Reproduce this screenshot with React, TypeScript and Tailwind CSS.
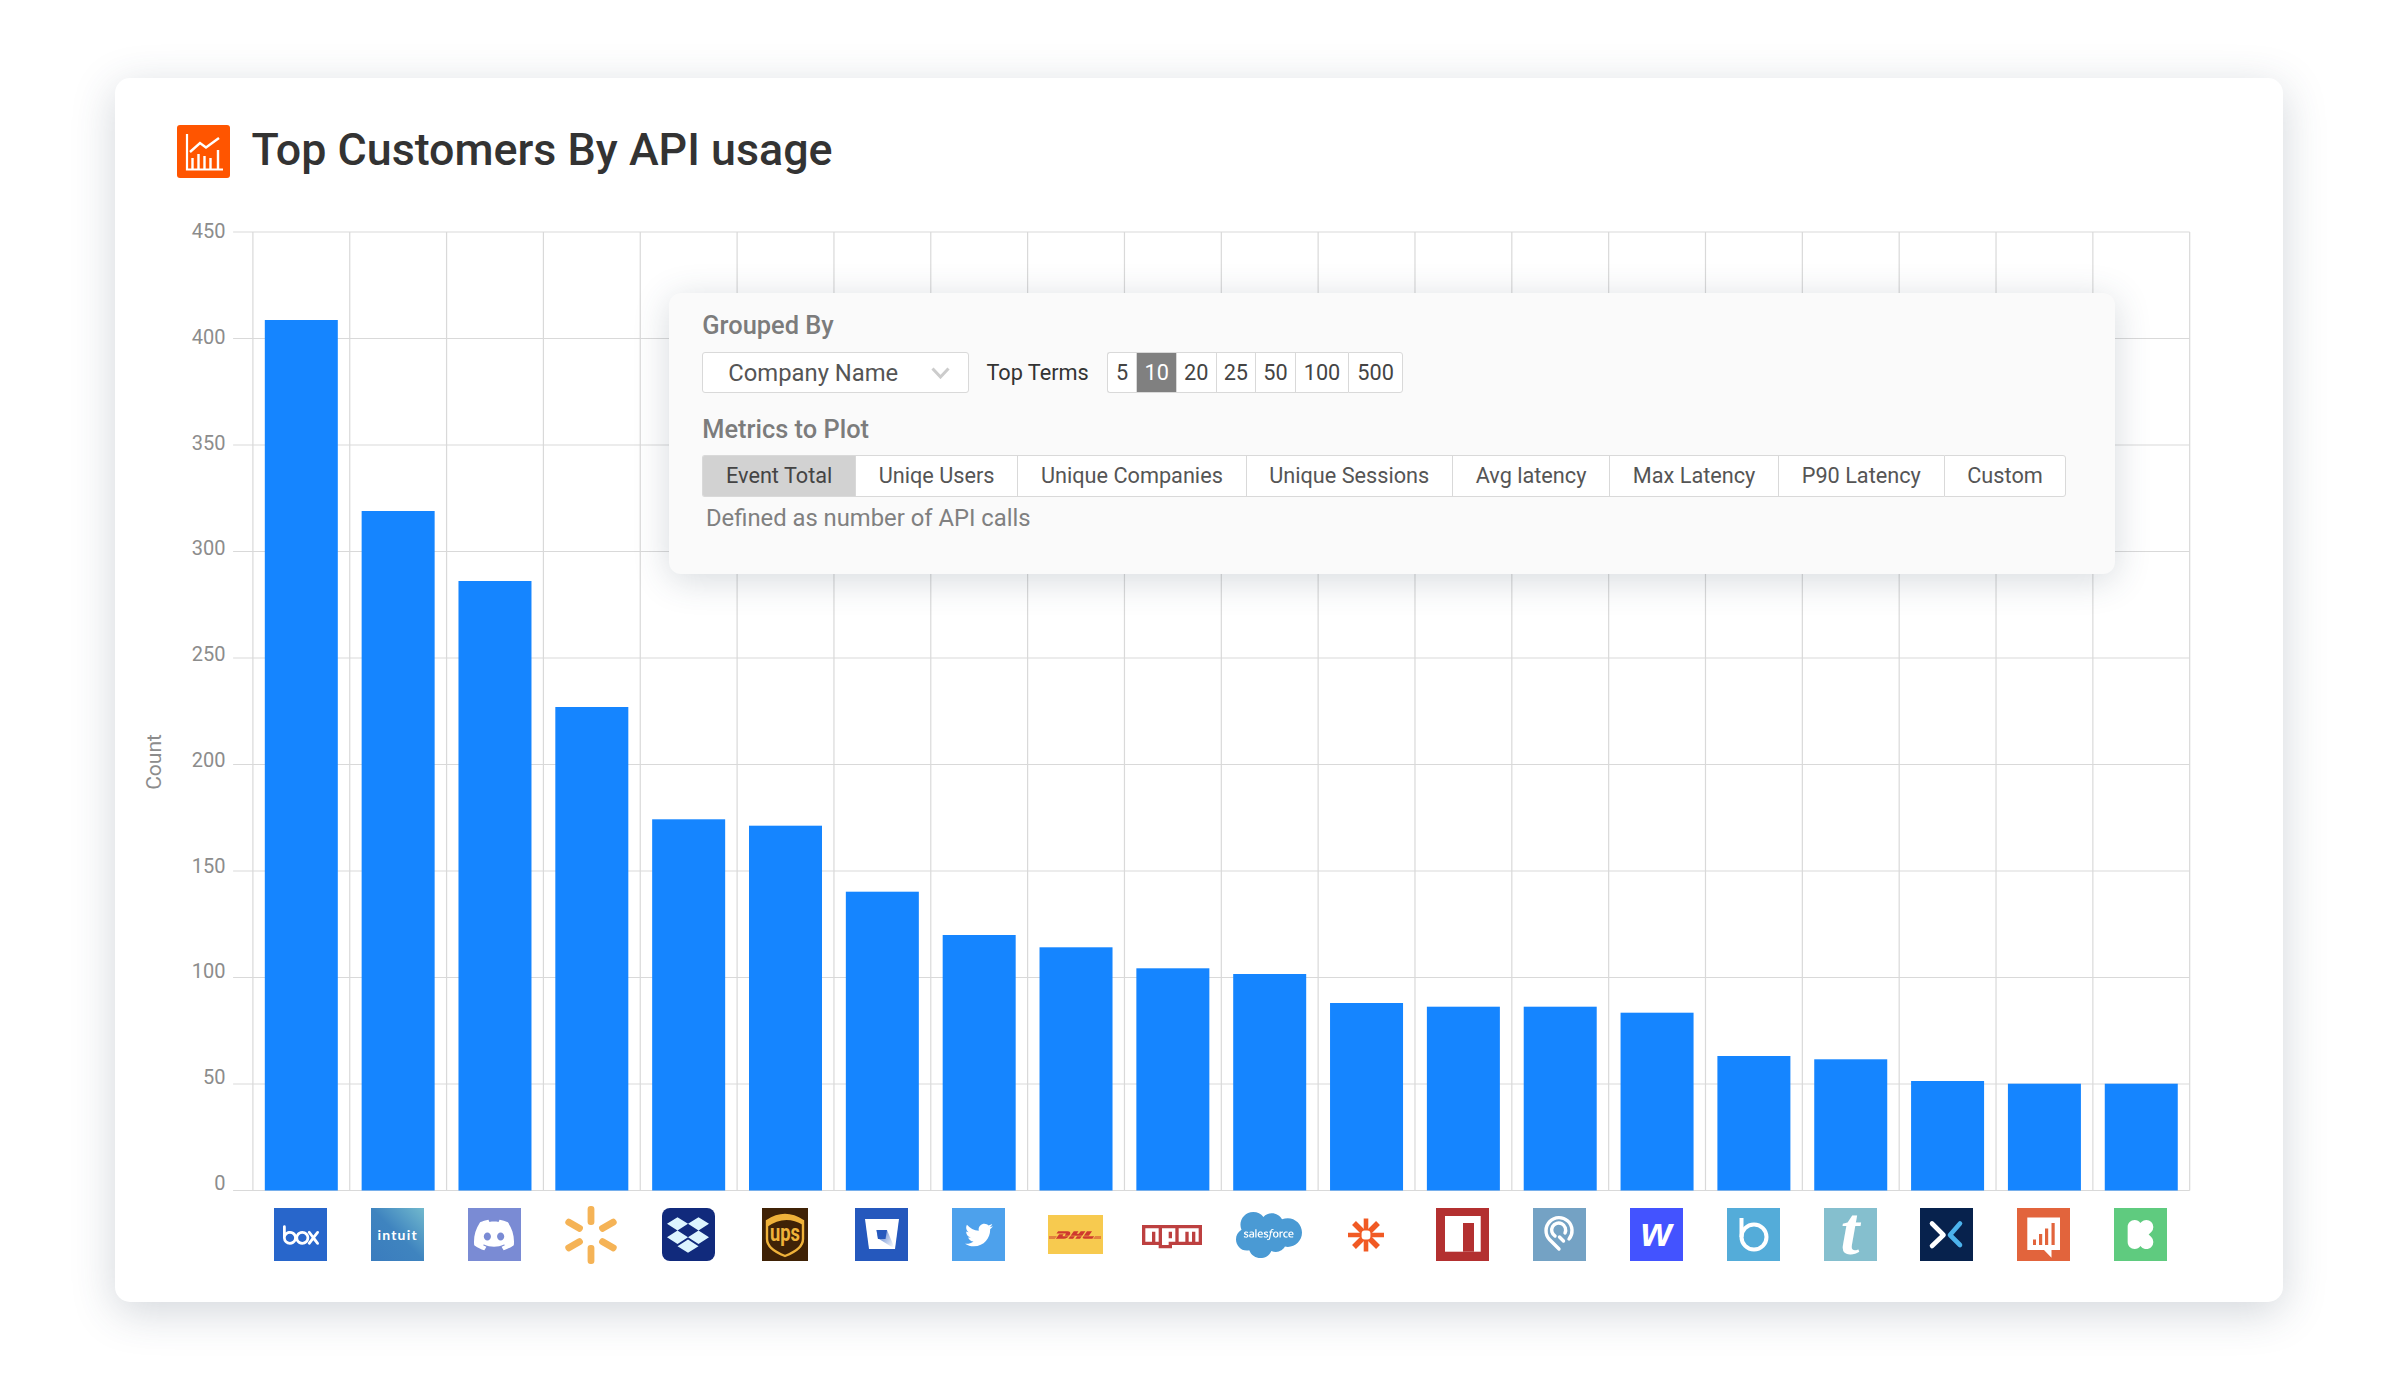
import { ReactNode } from 'react';
import { FaNpm, FaSalesforce, FaTwitter } from 'react-icons/fa';
import { SiBox, SiDhl, SiDiscord, SiDropbox, SiKickstarter } from 'react-icons/si';

const BAR_TOPS = [
  320, 511, 581, 707, 819.3, 825.7, 891.7, 935, 947.3, 968.3, 974, 1003, 1006.7, 1006.7, 1012.7, 1056, 1059.3, 1081,
  1083.7, 1083.7,
];
const BASELINE = 1190.5;
const COL = 96.84;
const GRID_LEFT = 252.4;

const TERMS = [
  { label: '5', cls: 'px-[8.2px] border-l-[1.5px] rounded-l-[3px] bg-white text-[#444]' },
  { label: '10', cls: 'px-[7.1px] border-l-[1.5px] bg-[#808080] text-white' },
  { label: '20', cls: 'px-[7.1px] border-l-[1.5px] bg-white text-[#444]' },
  { label: '25', cls: 'px-[7.1px] border-l-[1.5px] bg-white text-[#444]' },
  { label: '50', cls: 'px-[7.1px] border-l-[1.5px] bg-white text-[#444]' },
  { label: '100', cls: 'px-[8px] border-l-[1.5px] bg-white text-[#444]' },
  { label: '500', cls: 'px-[8px] border-x-[1.5px] rounded-r-[3px] bg-white text-[#444]' },
];

const METRICS = [
  { label: 'Event Total', cls: 'border-l-[1.5px] rounded-l-[3px] bg-[#d2d2d2] text-[#444]' },
  { label: 'Uniqe Users', cls: 'border-l-[1.5px] bg-white text-[#555]' },
  { label: 'Unique Companies', cls: 'border-l-[1.5px] bg-white text-[#555]' },
  { label: 'Unique Sessions', cls: 'border-l-[1.5px] bg-white text-[#555]' },
  { label: 'Avg latency', cls: 'border-l-[1.5px] bg-white text-[#555]' },
  { label: 'Max Latency', cls: 'border-l-[1.5px] bg-white text-[#555]' },
  { label: 'P90 Latency', cls: 'border-l-[1.5px] bg-white text-[#555]' },
  { label: 'Custom', cls: 'border-x-[1.5px] rounded-r-[3px] bg-white text-[#555]' },
];

const Tile = ({ cls, children }: { cls: string; children: ReactNode }) => (
  <div className={`w-[53px] h-[53px] flex items-center justify-center ${cls}`}>{children}</div>
);

const WalmartSpark = () => (
  <svg width="56" height="58" viewBox="-28 -29 56 58" fill="#f5b356">
    {[0, 60, 120, 180, 240, 300].map((deg) => (
      <rect key={deg} x="-3.4" y="-29" width="6.8" height="19" rx="3" transform={`rotate(${deg})`} />
    ))}
  </svg>
);

const ZapierMark = () => (
  <svg width="38" height="36" viewBox="-19 -18 38 36">
    <g stroke="#f15a24" strokeWidth="4.6">
      <line x1="-18" x2="18" y1="0" y2="0" />
      <line x1="0" x2="0" y1="-16.5" y2="16.5" />
      <line x1="-12" x2="12" y1="-12" y2="12" strokeWidth="5.4" />
      <line x1="-12" x2="12" y1="12" y2="-12" strokeWidth="5.4" />
    </g>
    <rect x="-4.4" y="-4.4" width="8.8" height="8.8" rx="3" fill="#fff" />
  </svg>
);

const UpsMark = () => (
  <svg width="46" height="53" viewBox="0 0 46 53">
    <path d="M5 13 Q23 1 41 13 V31 Q41 41 23 48 Q5 41 5 31 Z" fill="none" stroke="#efb23a" strokeWidth="2.4" />
    <path d="M5 13 Q23 1 41 13 V17 Q23 6 5 19 Z" fill="#efb23a" />
    <text x="8" y="33" fontSize="24" fontWeight="700" textLength="30" lengthAdjust="spacingAndGlyphs" fontFamily="Roboto, sans-serif" fill="#efb23a">
      ups
    </text>
  </svg>
);

const LOGOS: ReactNode[] = [
  <Tile cls="bg-[#2866cb]"><SiBox size={36} className="text-white" /></Tile>,
  <Tile cls="bg-gradient-to-tr from-[#3a7cbe] via-[#3f84bf] to-[#72b9cd]">
    <span className="text-white text-[14px] leading-none font-bold tracking-[1.2px] font-['Lato',sans-serif]">intuit</span>
  </Tile>,
  <Tile cls="bg-[#7a8bd4]"><SiDiscord size={40} className="text-white" /></Tile>,
  <WalmartSpark />,
  <Tile cls="bg-[#112a7c] rounded-[8px]"><SiDropbox size={42} className="text-[#ddf5ff]" /></Tile>,
  <Tile cls="bg-[#3f2206] !w-[46px]"><UpsMark /></Tile>,
  <Tile cls="bg-[#2558bd]">
    <svg width="53" height="53" viewBox="0 0 53 53">
      <defs>
        <linearGradient id="bucket" x1="0" y1="0.1" x2="1" y2="0.8">
          <stop offset="0.3" stopColor="#7c9bd8" />
          <stop offset="1" stopColor="#ffffff" />
        </linearGradient>
      </defs>
      <polygon points="10,11 44,11 40,41 14,41" fill="#fff" />
      <polygon points="21.5,22 32,22 40,41 24,31 23,31" fill="url(#bucket)" />
      <polygon points="21.5,22 32,22 30.5,31 23,31" fill="#2558bd" />
    </svg>
  </Tile>,
  <Tile cls="bg-[#4da1ec]"><FaTwitter size={28} className="text-white" /></Tile>,
  <div className="w-[55px] h-[39px] bg-[#f7ca4f] flex items-center justify-center"><SiDhl size={52} className="text-[#cf3a2f]" /></div>,
  <FaNpm size={60} className="text-[#bd4040]" />,
  <FaSalesforce size={66} className="text-[#4a9ad4]" />,
  <ZapierMark />,
  <Tile cls="bg-[#b33030]">
    <svg width="53" height="53" viewBox="0 0 53 53">
      <rect x="9" y="8" width="35.7" height="35.7" fill="#fff" />
      <rect x="27" y="15" width="11" height="28.7" fill="#b33030" />
    </svg>
  </Tile>,
  <Tile cls="bg-[#74a2c4]">
    <svg width="53" height="53" viewBox="0 0 53 53" fill="none" stroke="#fff" strokeWidth="3.4" strokeLinecap="round">
      <path d="M26 41 L16.5 31.5 A13 13 0 1 1 36 31" />
      <path d="M30.5 33 L26.5 29 M32 25 A7 7 0 1 0 22 28" />
    </svg>
  </Tile>,
  <Tile cls="bg-[#4353ff]">
    <span className="text-white text-[40px] leading-none font-bold italic pb-[6px] font-['Liberation_Sans',sans-serif]">w</span>
  </Tile>,
  <Tile cls="bg-[#54acd9]">
    <svg width="53" height="53" viewBox="0 0 53 53" fill="none" stroke="#fff" strokeWidth="4">
      <circle cx="27" cy="29" r="12.5" />
      <path d="M14.5 10 V29" />
    </svg>
  </Tile>,
  <Tile cls="bg-[#85bfce]">
    <span className="text-white text-[68px] leading-none font-bold italic pb-[8px] font-['Liberation_Serif',serif]">t</span>
  </Tile>,
  <Tile cls="bg-[#07224d]">
    <svg width="53" height="53" viewBox="0 0 53 53" fill="none" strokeWidth="4.6" strokeLinecap="round" strokeLinejoin="round">
      <path d="M12 15.5 L23.5 27 L12 38" stroke="#fff" />
      <path d="M40 15.5 L30 27 L40 37" stroke="#4cb3ec" />
    </svg>
  </Tile>,
  <Tile cls="bg-[#e2643c]">
    <svg width="53" height="53" viewBox="0 0 53 53">
      <polygon points="10.3,9.5 43,9.5 43,42 34.5,42 34.5,49.7 27,42 10.3,42" fill="#fff" />
      <rect x="16" y="31.5" width="3" height="5.5" fill="#e2643c" />
      <rect x="22" y="26" width="3.2" height="11" fill="#e2643c" />
      <rect x="28" y="20.5" width="3.2" height="16.5" fill="#e2643c" />
      <rect x="34.5" y="15" width="3.2" height="22" fill="#e2643c" />
    </svg>
  </Tile>,
  <Tile cls="bg-[#5fcb7f]"><SiKickstarter size={29} className="text-white" /></Tile>,
];

const TitleIcon = () => (
  <div className="w-[53px] h-[53px] rounded-[3px] bg-[#ff5500] shrink-0">
    <svg width="53" height="53" viewBox="0 0 53 53" fill="none" stroke="#fff">
      <path d="M10 9 V44.5 H46" strokeWidth="2.2" />
      <path d="M15.5 44 V33 M21.5 44 V29 M27.5 44 V31 M33.5 44 V33 M41 44 V25" strokeWidth="2.4" />
      <path d="M13 27 L23 18 L29 22.5 L42 13" strokeWidth="2.4" />
    </svg>
  </div>
);

const Chart = () => (
  <svg className="block" width="2168.5" height="1000" viewBox="114.5 200 2168.5 1000">
    {Array.from({ length: 10 }).map((_, i) => (
      <line key={i} x1="232.6" x2={GRID_LEFT + COL * 20} y1={232 + 106.5 * i} y2={232 + 106.5 * i} stroke="#d9d9d9" strokeWidth="1.2" />
    ))}
    {Array.from({ length: 21 }).map((_, i) => (
      <line key={i} x1={GRID_LEFT + COL * i} x2={GRID_LEFT + COL * i} y1="232" y2={BASELINE} stroke="#d9d9d9" strokeWidth="1.2" />
    ))}
    {BAR_TOPS.map((top, i) => (
      <rect key={i} x={264.3 + COL * i} y={top} width="73" height={BASELINE - top} fill="#1585ff" />
    ))}
    {[450, 400, 350, 300, 250, 200, 150, 100, 50, 0].map((v, i) => (
      <text key={v} x="225" y={238 + 105.75 * i} textAnchor="end" fontSize="20" fontFamily="Roboto, sans-serif" fill="#8c8c8c">
        {v}
      </text>
    ))}
    <text
      transform="translate(160 762) rotate(-90)"
      textAnchor="middle"
      fontSize="21"
      fontFamily="Roboto, sans-serif"
      fill="#8c8c8c"
    >
      Count
    </text>
  </svg>
);

const ControlsPanel = () => (
  <div className="absolute left-[554.2px] top-[215.2px] w-[1446.6px] h-[281px] rounded-[12px] bg-[#fafafa] shadow-[0_6px_36px_rgba(50,70,90,0.2)] pl-[33.6px] pt-[16.5px]">
    <div className="text-[25.4px] leading-[32px] font-medium text-[#7c7c7c]">Grouped By</div>
    <div className="flex items-center mt-[11px] text-[21.7px]">
      <div className="w-[266.7px] h-[41.3px] flex items-center justify-between pl-[25px] pr-[18px] bg-white border-[1.5px] border-[#d9d9d9] rounded-[3px] text-[#555]">
        <span className="text-[23.8px] pt-[1.5px]">Company Name</span>
        <svg width="19" height="12" viewBox="0 0 19 12" fill="none" stroke="#cccccc" strokeWidth="3">
          <path d="M1.5 1.5 L9.5 10 L17.5 1.5" />
        </svg>
      </div>
      <span className="ml-[17.5px] mr-[18px] pt-[1.5px] text-[#333]">Top Terms</span>
      <div className="flex h-[41.3px]">
        {TERMS.map((t) => (
          <div key={t.label} className={`flex items-center pt-[1.5px] border-y-[1.5px] border-[#d9d9d9] ${t.cls}`}>
            {t.label}
          </div>
        ))}
      </div>
    </div>
    <div className="mt-[20px] text-[25.4px] leading-[32px] font-medium text-[#7c7c7c]">Metrics to Plot</div>
    <div className="flex h-[41.3px] mt-[10px] text-[21.7px]">
      {METRICS.map((m) => (
        <div key={m.label} className={`flex items-center px-[22.7px] border-y-[1.5px] border-[#d9d9d9] ${m.cls}`}>
          {m.label}
        </div>
      ))}
    </div>
    <div className="mt-[6.5px] ml-[3.7px] text-[23.8px] leading-[30px] text-[#808080]">Defined as number of API calls</div>
  </div>
);

export default function App() {
  return (
    <div className="w-[2400px] h-[1381px] overflow-hidden bg-white pl-[114.5px] pt-[77.5px] font-['Roboto',sans-serif]">
      <div className="relative w-[2168.5px] h-[1224.5px] rounded-[15px] bg-white shadow-[0_10px_44px_rgba(50,70,90,0.22)]">
        <div className="flex items-start gap-[22px] pl-[62px] pt-[47.5px]">
          <TitleIcon />
          <h1 className="text-[44.8px] leading-[50px] font-medium text-[#333]">Top Customers By API usage</h1>
        </div>
        <div className="mt-[21.5px]">
          <Chart />
        </div>
        <div className="flex mt-[8.5px] pl-[137.9px]">
          {LOGOS.map((logo, i) => (
            <div key={i} className="w-[96.84px] h-[53px] flex items-center justify-center">
              {logo}
            </div>
          ))}
        </div>
        <ControlsPanel />
      </div>
    </div>
  );
}
